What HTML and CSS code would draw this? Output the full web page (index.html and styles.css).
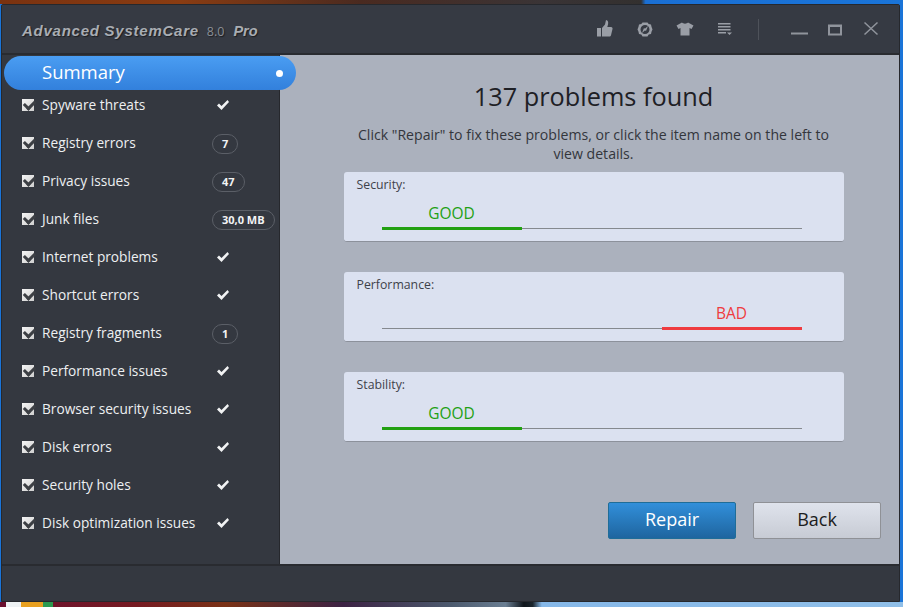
FILE: index.html
```html
<!DOCTYPE html>
<html lang="en">
<head>
<meta charset="utf-8">
<title>Advanced SystemCare</title>
<link rel="stylesheet" href="styles.css">
</head>
<body>
<div class="desktop">
  <div class="taskbits"><span class="bit bit-w"></span><span class="bit bit-o"></span><span class="bit bit-g"></span></div>
  <div class="window">
    <header class="titlebar">
      <div class="brand"><b>Advanced SystemCare</b><span class="ver">8.0</span><b class="pro">Pro</b></div>
      <div class="tools">
        <svg class="ic" viewBox="0 0 18 18"><path d="M1 8h4v8.500H1zM6 8l3-3.500L10 0c2 .2 2.600 2.200 2 4.500L11.300 7H15c1.300 0 1.800 1 1.500 2l-1.500 6.300c-.2.800-.8 1.200-1.700 1.200H6z"/></svg>
        <svg class="ic" viewBox="0 0 18 18"><path fill-rule="evenodd" d="M6.500 2.500h5l1.200 1.500 2.300.5.500 2.300L16.500 9.500l-1 2.200-.5 2.300-2.300.5-1.200 2h-5l-1.200-2L3 14l-.5-2.300-1-2.200 1-2.700L3 4.500 5.300 4zM9 5a4.500 4.500 0 1 0 0 9A4.500 4.500 0 0 0 9 5z"/><path d="M12 6l-2 5-2-1.500zM6 13l2-5 2 1.500z"/></svg>
        <svg class="ic" viewBox="0 0 18 18"><path d="M6 2.500c1 1.500 5 1.500 6 0l5.500 3-2 3.500-2-1v7.500h-9V8l-2 1L.5 5.500z"/></svg>
        <svg class="ic" viewBox="0 0 18 18"><path d="M2 3h12.500v1.600H2zM2 6h12.500v1.600H2zM2 9h12.500v1.600H2zM2 12h8v1.600H2zM11 12.500h5l-2.500 2.500z"/></svg>
        <span class="sep"></span>
        <svg class="wc wc-min" viewBox="0 0 18 18"><path d="M0 12.500h17v2H0z"/></svg>
        <svg class="wc wc-max" viewBox="0 0 18 18"><path fill-rule="evenodd" d="M2 4.500h14v11H2zM4 7v6.500h10V7z"/></svg>
        <svg class="wc" viewBox="0 0 18 18"><path class="x" d="M2.500 2.500l13 12M15.500 2.500l-13 12"/></svg>
      </div>
    </header>
    <div class="body">
      <aside class="side">
        <div class="summary"><span>Summary</span><i class="dot"></i></div>
        <ul class="list">
          <li><span class="box"></span><span class="name">Spyware threats</span><svg class="st" viewBox="0 0 12 10"><path d="M0 5.500L2 3.500 4.500 6 10.500 0 12 2 4.500 10z"/></svg></li>
          <li><span class="box"></span><span class="name">Registry errors</span><span class="pill">7</span></li>
          <li><span class="box"></span><span class="name">Privacy issues</span><span class="pill">47</span></li>
          <li><span class="box"></span><span class="name">Junk files</span><span class="pill">30,0 MB</span></li>
          <li><span class="box"></span><span class="name">Internet problems</span><svg class="st" viewBox="0 0 12 10"><path d="M0 5.500L2 3.500 4.500 6 10.500 0 12 2 4.500 10z"/></svg></li>
          <li><span class="box"></span><span class="name">Shortcut errors</span><svg class="st" viewBox="0 0 12 10"><path d="M0 5.500L2 3.500 4.500 6 10.500 0 12 2 4.500 10z"/></svg></li>
          <li><span class="box"></span><span class="name">Registry fragments</span><span class="pill">1</span></li>
          <li><span class="box"></span><span class="name">Performance issues</span><svg class="st" viewBox="0 0 12 10"><path d="M0 5.500L2 3.500 4.500 6 10.500 0 12 2 4.500 10z"/></svg></li>
          <li><span class="box"></span><span class="name">Browser security issues</span><svg class="st" viewBox="0 0 12 10"><path d="M0 5.500L2 3.500 4.500 6 10.500 0 12 2 4.500 10z"/></svg></li>
          <li><span class="box"></span><span class="name">Disk errors</span><svg class="st" viewBox="0 0 12 10"><path d="M0 5.500L2 3.500 4.500 6 10.500 0 12 2 4.500 10z"/></svg></li>
          <li><span class="box"></span><span class="name">Security holes</span><svg class="st" viewBox="0 0 12 10"><path d="M0 5.500L2 3.500 4.500 6 10.500 0 12 2 4.500 10z"/></svg></li>
          <li><span class="box"></span><span class="name">Disk optimization issues</span><svg class="st" viewBox="0 0 12 10"><path d="M0 5.500L2 3.500 4.500 6 10.500 0 12 2 4.500 10z"/></svg></li>
        </ul>
      </aside>
      <main class="main">
        <h1>137 problems found</h1>
        <p class="lead">Click "Repair" to fix these problems, or click the item name on the left to view details.</p>
        <section class="card">
          <div class="label">Security:</div>
          <div class="meter good"><div class="word">GOOD</div><div class="line"><i></i></div></div>
        </section>
        <section class="card">
          <div class="label">Performance:</div>
          <div class="meter bad"><div class="word">BAD</div><div class="line"><i></i></div></div>
        </section>
        <section class="card">
          <div class="label">Stability:</div>
          <div class="meter good"><div class="word">GOOD</div><div class="line"><i></i></div></div>
        </section>
        <div class="actions">
          <button class="btn primary">Repair</button>
          <button class="btn">Back</button>
        </div>
      </main>
    </div>
    <footer class="foot"></footer>
  </div>
</div>
</body>
</html>
```
FILE: styles.css
```css
* { box-sizing: border-box; }
html, body { margin: 0; height: 100%; }
body { width: 903px; height: 607px; overflow: hidden; font-family: "Open Sans", "Noto Sans", sans-serif; }
.desktop { position: relative; width: 903px; height: 607px; padding: 4px 3px 5px 1px;
  background:
    linear-gradient(90deg, #7a3210 0, #8a3c12 20%, #4a2a20 40%, #3a3436 60%, #33302f 71%, #1a6fd4 71.5%, #1a74d8 100%) top / 100% 4px no-repeat,
    linear-gradient(90deg, #6a1030 0, #761a22 15%, #7a3216 25%, #3c2244 38%, #4c5a6e 50%, #6a7e92 56%, #10161c 58%, #1a242c 59%, #86b8e8 60%, #90bfe8 100%) bottom / 100% 5px no-repeat,
    #1a74d8; }
.taskbits { position: absolute; left: 6px; bottom: 0; display: flex; }
.bit { height: 5px; }
.bit-w { width: 15px; background: #eef2f4; }
.bit-o { width: 22px; background: #e8a020; }
.bit-g { width: 10px; background: #2b9a50; }
.window { display: flex; flex-direction: column; height: 100%; border: 1px solid #26282d; background: #343840; border-radius: 2px 2px 0 0; }
.titlebar { display: flex; align-items: center; justify-content: space-between; height: 50px; background: #363a43; border-bottom: 2px solid #292b30; flex: none; }
.brand { margin-left: 20px; margin-top: 3px; color: #a9adb3; font: italic 700 15px "Liberation Sans", sans-serif; display: flex; align-items: baseline; text-shadow: 1px 1px 1px #1c1d20; letter-spacing: .75px; }
.ver { font: 400 12.500px "Open Sans", sans-serif; color: #8b8f96; margin-left: 8px; letter-spacing: 0; }
.pro { margin-left: 9px; font-weight: 700; font-size: 14.500px; letter-spacing: 0; }
.tools { display: flex; align-items: center; }
.ic { width: 18px; height: 18px; fill: #9a9ea6; margin-right: 22px; display: block; }
.sep { width: 1px; height: 21px; background: #4e525a; margin: 0 32px 0 2px; }
.wc { width: 18px; height: 18px; fill: #90949c; display: block; margin-right: 19px; }
.wc-min { margin-right: 17px; }
.wc-max { margin-right: 18px; }
.x { fill: none; stroke: #90949c; stroke-width: 1.500; }
.body { flex: 1; display: flex; min-height: 0; position: relative; }
.side { width: 278px; flex: none; background: #343840; border-right: 1px solid #26282d; }
.summary { position: relative; z-index: 1; width: 292px; height: 34px; margin: 1px 0 -4px 2px; padding: 0 13px 3px 38px; border-radius: 17px; display: flex; align-items: center; justify-content: space-between; color: #fff; font-size: 18.500px; background: linear-gradient(#4a9df2, #3280dc); }
.dot { width: 7px; height: 7px; background: #fff; border-radius: 50%; margin-top: 3px; }
.list { list-style: none; margin: 0; padding: 0; }
.list li { position: relative; height: 38px; display: flex; align-items: center; padding-left: 20px; color: #eef0f2; font-size: 13.700px; }
.box { width: 12px; height: 12px; background: linear-gradient(135deg, #f4f4f4, #cfcfcf); margin: 0 8px 1px 0; flex: none; position: relative; }
.box::after { content: ""; position: absolute; left: 2px; top: 1px; width: 8px; height: 5px; border-left: 3px solid #3c3f44; border-bottom: 3px solid #3c3f44; transform: rotate(-45deg); }
.name { white-space: nowrap; margin-bottom: 1px; }
.st { position: absolute; left: 215px; top: 14px; width: 12px; height: 10px; fill: #f2f3f4; }
.pill { position: absolute; left: 210px; top: 10px; height: 20px; padding: 0 9px; border: 1px solid #5b5f67; border-radius: 10px; font-size: 11px; font-weight: 700; line-height: 18px; color: #f2f3f4; }
.main { flex: 1; min-width: 0; display: flex; flex-direction: column; align-items: center; background: #abb1bd; padding: 23px 0 0 8px; position: relative; }
h1 { margin: 0; font-size: 25.300px; font-weight: 400; line-height: 36px; color: #1e2025; }
.lead { margin: 11px 0 0; width: 500px; text-align: center; font-size: 14.100px; line-height: 19px; color: #33363c; }
.card { width: 500px; height: 70px; margin-bottom: 30px; padding: 5px 13px 0; border-radius: 3px; background: #dbe1f0; border-bottom: 1px solid #8c919b; }
.lead + .card { margin-top: 9px; }
.label { font-size: 12.300px; line-height: 16px; color: #3f424a; }
.meter { margin: 0 29px 0 25px; width: 420px; }
.word { margin-top: 10px; font-size: 15.500px; line-height: 20px; width: 140px; text-align: center; }
.line { position: relative; height: 1px; margin-top: 5px; background: #85898f; }
.line i { position: absolute; top: -1px; height: 3px; width: 140px; }
.good .word { color: #22a012; }
.good .line i { left: 0; background: #22a012; }
.bad .word { color: #ef3b40; margin-left: 280px; }
.bad .line i { right: 0; background: #ef3b40; }
.actions { margin-top: auto; margin-bottom: 25px; align-self: flex-end; display: flex; gap: 17px; margin-right: 18px; }
.btn { width: 128px; height: 37px; font: 18px "Open Sans", sans-serif; border-radius: 2px; border: 1px solid #8f9196; color: #1b1c20; background: linear-gradient(#dfe3ec, #c7cbd4); padding: 0 0 3px; }
.primary { color: #fff; border-color: #1f6d98; background: linear-gradient(#318fda, #1f659f); }
.foot { height: 37px; flex: none; background: #343840; border-top: 2px solid #292b30; }
```
